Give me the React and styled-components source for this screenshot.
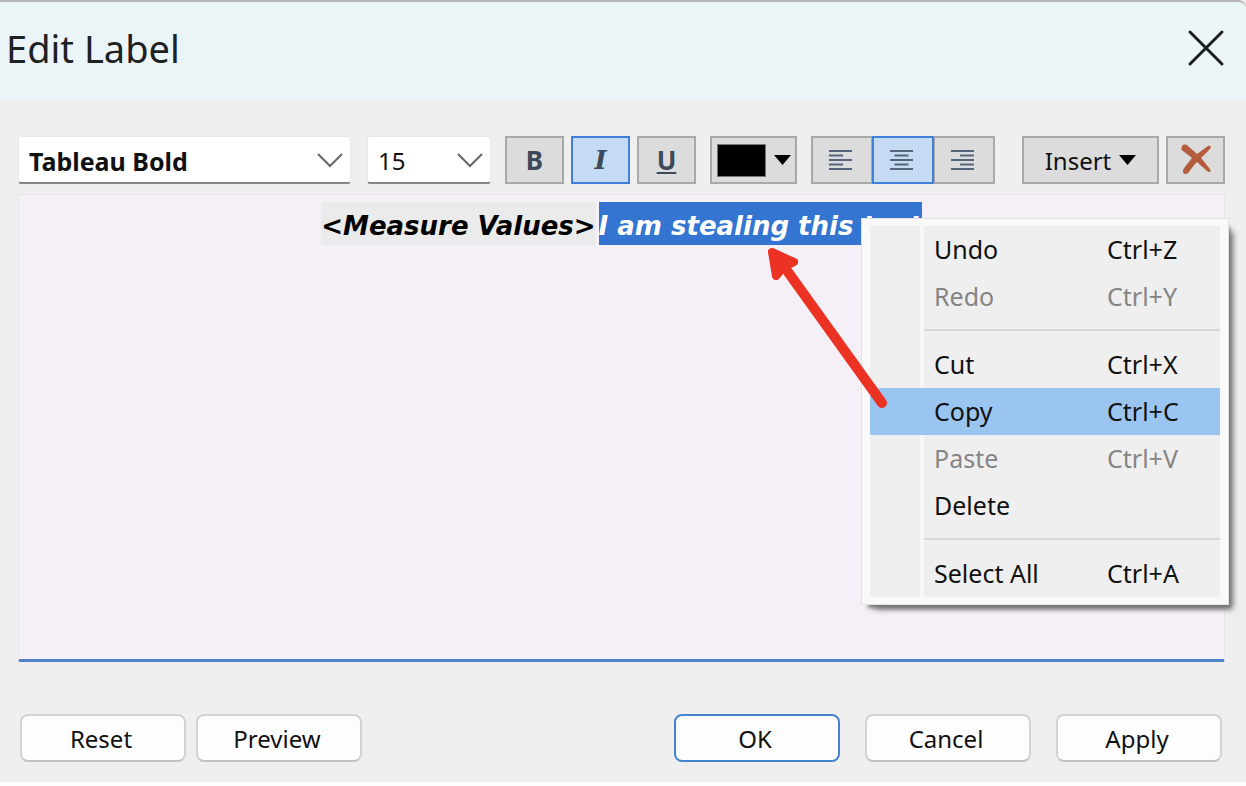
import React from "react";
import styled, { createGlobalStyle, css } from "styled-components";

const GlobalStyle = createGlobalStyle`
  *, *::before, *::after { box-sizing: border-box; }
  body { margin: 0; background: #fdfdfd; font-family: "Noto Sans", "Open Sans", sans-serif; color: #111; }
  button, select { font: inherit; color: inherit; margin: 0; }
`;

const Dialog = styled.main`
  min-height: calc(100vh - 4px);
  display: flex;
  flex-direction: column;
  background: #efefef;
`;

const TitleBar = styled.header`
  display: flex;
  align-items: center;
  justify-content: space-between;
  height: 100px;
  padding: 0 20px 6px 6px;
  background: #ebf5f8;
  border-top: 2px solid #b7b5b6;
  border-radius: 0 8px 0 0;
`;

const Title = styled.h1`
  margin: 0;
  font-size: 38px;
  font-weight: 400;
  line-height: 48px;
  color: #1d2122;
`;

const IconButton = styled.button`
  display: flex;
  padding: 0;
  border: 0;
  background: none;
`;

const Body = styled.section`
  flex: 1;
  display: flex;
  flex-direction: column;
  padding: 36px 21px 20px 18px;
`;

const Toolbar = styled.div`
  display: flex;
  align-items: center;
  height: 48px;
  margin-bottom: 10px;
`;

const Group = styled.div`
  display: flex;
  gap: ${(p) => p.$gap || 0}px;
  margin-left: ${(p) => (p.$end ? "auto" : "14px")};
`;

const SelectBox = styled.div`
  display: grid;
  flex: 0 0 ${(p) => p.$width}px;
  height: 48px;
  margin-left: ${(p) => p.$before || 0}px;
  align-items: center;
  background: #fff;
  border: 1px solid #e9e9e9;
  border-bottom: 2px solid #868686;
  border-radius: 3px;

  select {
    grid-area: 1 / 1;
    width: 100%;
    height: 45px;
    padding: 2px 40px 0 10px;
    appearance: none;
    border: 0;
    background: transparent;
    font-size: ${(p) => (p.$bold ? 25 : 24)}px;
    font-weight: ${(p) => (p.$bold ? 700 : 400)};
    outline: 0;
  }
  svg {
    grid-area: 1 / 1;
    justify-self: end;
    margin-right: 7px;
    pointer-events: none;
  }
`;

const ToolButton = styled.button`
  display: flex;
  align-items: center;
  justify-content: center;
  gap: 8px;
  width: ${(p) => p.$width || 59}px;
  height: 48px;
  padding: 0;
  font-size: 24px;
  border: 2px solid #a9a9a9;
  background: #dcdcdc;
  ${(p) =>
    p.$active &&
    css`
      border-color: #3f80da;
      background: #c5dbf3;
      z-index: 1;
    `}
`;

const AlignGroup = styled(Group)`
  ${ToolButton} { padding-right: 3px; }
  ${ToolButton} + ${ToolButton} { margin-left: -1px; }
`;

const Glyph = styled.span`
  font: ${(p) => p.$face};
  color: #3d4858;
`;

const Swatch = styled.span`
  width: 49px;
  height: 33px;
  background: #000;
  border: 1px solid #777;
`;

const EditorWrap = styled.div`
  position: relative;
  flex: 1;
  display: flex;
`;

const Editor = styled.div`
  flex: 1;
  min-height: 468px;
  padding-top: 7px;
  text-align: center;
  background: #f5f0f7;
  border: 1px solid #e6e7ea;
  border-bottom: 3px solid #4f82ca;
  border-radius: 0 0 2px 2px;
  outline: 0;
  font-family: "DejaVu Sans", sans-serif;
  font-size: 26px;
  font-weight: 700;
  font-style: italic;
  line-height: 38px;
  white-space: nowrap;
`;

const Field = styled.span`
  display: inline-block;
  padding-top: 5px;
  background: #ebebeb;
  color: #000;
`;

const Selection = styled.span`
  display: inline-block;
  margin-left: 3px;
  padding-top: 5px;
  background: #3375d0;
  color: #fff;
`;

const Menu = styled.div`
  position: absolute;
  top: 24px;
  right: -4px;
  width: 368px;
  padding: 7px 8px;
  background: #f9f9f9;
  border: 1px solid #e2e2e2;
  box-shadow: 9px 9px 6px -5px #777, 4px 6px 4px -3px #777;
`;

const MenuList = styled.div`
  background: linear-gradient(to right, #efefef 50px, #f8f8f8 50px, #f8f8f8 54px, #efefef 54px);
`;

const MenuItem = styled.button`
  display: grid;
  grid-template-columns: 1fr 113px;
  align-items: center;
  width: 100%;
  height: 47px;
  padding: 0 0 1px 64px;
  border: 0;
  text-align: left;
  font-size: 25px;
  line-height: 34px;
  background: ${(p) => (p.$highlighted ? "#9bc5f1" : "transparent")};
  &:disabled { color: #858585; }
`;

const Separator = styled.hr`
  height: 2px;
  margin: 0 0 0 54px;
  border: 0;
  background: #d8d8d8;
`;

const SeparatorRow = styled.div`
  padding: 9px 0 10px;
`;

const Arrow = styled.svg`
  position: absolute;
  top: 52px;
  right: 335px;
  pointer-events: none;
`;

const Footer = styled.footer`
  display: flex;
  align-items: center;
  justify-content: space-between;
  padding: 52px 3px 0 2px;
`;

const FooterGroup = styled.div`
  display: flex;
  gap: ${(p) => p.$gap}px;
`;

const PushButton = styled.button`
  width: 166px;
  height: 48px;
  padding: 2px 4px 0 0;
  font-size: 24px;
  line-height: 34px;
  background: #fdfdfd;
  border: 2px solid ${(p) => (p.$primary ? "#4583ce" : "#d3d3d3")};
  border-bottom-color: ${(p) => (p.$primary ? "#4583ce" : "#c2c2c2")};
  border-radius: 8px;
`;

const Chevron = () => (
  <svg width="26" height="16" viewBox="0 0 26 16" fill="none" stroke="#666" strokeWidth="2" aria-hidden="true">
    <path d="M1 2 L13 14 L25 2" />
  </svg>
);

const Caret = () => (
  <svg width="17" height="10" viewBox="0 0 17 10" aria-hidden="true">
    <path d="M0 0 H17 L8.5 10 Z" fill="#000" />
  </svg>
);

const alignPaths = {
  left: "M0 2H23 M0 6.5H14 M0 11H23 M0 15.5H14 M0 20H23",
  center: "M0 2H23 M4.5 6.5H18.5 M0 11H23 M4.5 15.5H18.5 M0 20H23",
  right: "M0 2H23 M9 6.5H23 M0 11H23 M9 15.5H23 M0 20H23",
};

const AlignIcon = ({ kind }) => (
  <svg width="23" height="22" viewBox="0 0 23 22" stroke="#56647a" strokeWidth="2.2" aria-hidden="true">
    <path d={alignPaths[kind]} />
  </svg>
);

const commands = [
  { label: "Undo", keys: "Ctrl+Z" },
  { label: "Redo", keys: "Ctrl+Y", disabled: true },
  null,
  { label: "Cut", keys: "Ctrl+X" },
  { label: "Copy", keys: "Ctrl+C", highlighted: true },
  { label: "Paste", keys: "Ctrl+V", disabled: true },
  { label: "Delete" },
  null,
  { label: "Select All", keys: "Ctrl+A" },
];

export default function App() {
  return (
    <>
      <GlobalStyle />
      <Dialog>
        <TitleBar>
          <Title>Edit Label</Title>
          <IconButton aria-label="Close">
            <svg width="40" height="40" viewBox="0 0 40 40" stroke="#1b1f20" strokeWidth="3" strokeLinecap="round">
              <path d="M4 4 L36 36 M36 4 L4 36" />
            </svg>
          </IconButton>
        </TitleBar>
        <Body>
          <Toolbar role="toolbar" aria-label="Formatting">
            <SelectBox $width={333} $bold>
              <select aria-label="Font">
                <option>Tableau Bold</option>
              </select>
              <Chevron />
            </SelectBox>
            <SelectBox $width={124} $before={16}>
              <select aria-label="Font size">
                <option>15</option>
              </select>
              <Chevron />
            </SelectBox>
            <Group $gap={7}>
              <ToolButton aria-label="Bold">
                <Glyph $face={'700 26px/30px "Noto Sans"'}>B</Glyph>
              </ToolButton>
              <ToolButton $active aria-label="Italic" aria-pressed="true">
                <Glyph $face={'italic 700 26px/30px "DejaVu Serif"'}>I</Glyph>
              </ToolButton>
              <ToolButton aria-label="Underline">
                <Glyph $face={'700 26px/30px "Noto Sans"'}>
                  <u>U</u>
                </Glyph>
              </ToolButton>
            </Group>
            <Group>
              <ToolButton $width={87} aria-label="Text color">
                <Swatch />
                <Caret />
              </ToolButton>
            </Group>
            <AlignGroup>
              <ToolButton $width={62} aria-label="Align left"><AlignIcon kind="left" /></ToolButton>
              <ToolButton $width={62} $active aria-label="Align center" aria-pressed="true"><AlignIcon kind="center" /></ToolButton>
              <ToolButton $width={62} aria-label="Align right"><AlignIcon kind="right" /></ToolButton>
            </AlignGroup>
            <Group $gap={7} $end>
              <ToolButton $width={137}>
                Insert
                <Caret />
              </ToolButton>
              <ToolButton aria-label="Clear">
                <svg width="32" height="32" viewBox="0 0 32 32" fill="#b35c3e">
                  <path d="M2 3 C2 0 6 0 8 2 L17 10 L28 2 C30 1 32 3 30 5 L21 14 L30 25 C32 28 29 29 27 27 L17 18 C13 22 11 25 9 28 C7 31 2 31 3 26 C5 22 9 18 12 14 L3 7 C1 6 1 4 2 3 Z" />
                </svg>
              </ToolButton>
            </Group>
          </Toolbar>
          <EditorWrap>
            <Editor role="textbox" aria-multiline="true" aria-label="Label text" tabIndex={0}>
              <Field>&lt;Measure Values&gt;</Field>
              <Selection>I am stealing this text</Selection>
            </Editor>
            <Menu>
              <MenuList role="menu">
                {commands.map((c, i) =>
                  c ? (
                    <MenuItem key={i} role="menuitem" disabled={c.disabled} $highlighted={c.highlighted}>
                      <span>{c.label}</span>
                      <span>{c.keys}</span>
                    </MenuItem>
                  ) : (
                    <SeparatorRow key={i}>
                      <Separator />
                    </SeparatorRow>
                  )
                )}
              </MenuList>
            </Menu>
            <Arrow width="124" height="164" viewBox="0 0 124 164" aria-hidden="true">
              <path d="M116 157 L22 26" stroke="#ec3323" strokeWidth="10" strokeLinecap="round" />
              <path d="M6 6 L28 16 L17 22 L10 30 Z" fill="#ec3323" stroke="#ec3323" strokeWidth="8" strokeLinejoin="round" />
            </Arrow>
          </EditorWrap>
          <Footer>
            <FooterGroup $gap={10}>
              <PushButton>Reset</PushButton>
              <PushButton>Preview</PushButton>
            </FooterGroup>
            <FooterGroup $gap={25}>
              <PushButton $primary>OK</PushButton>
              <PushButton>Cancel</PushButton>
              <PushButton>Apply</PushButton>
            </FooterGroup>
          </Footer>
        </Body>
      </Dialog>
    </>
  );
}
